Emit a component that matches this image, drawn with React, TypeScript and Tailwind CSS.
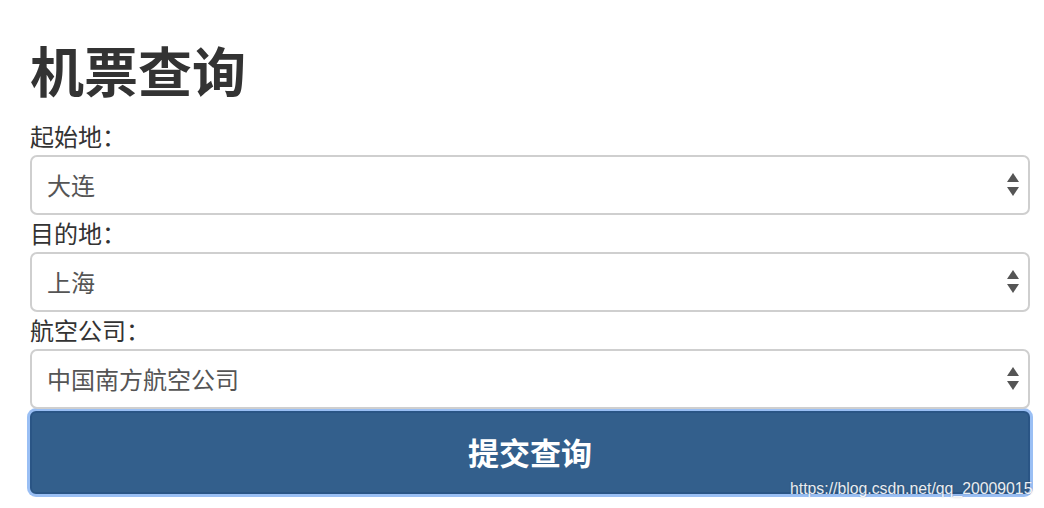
import React from "react";

const font = { fontFamily: '"Noto Sans CJK SC", "Noto Sans", sans-serif' };

function Arrows() {
  return (
    <svg width="14" height="26" viewBox="0 0 14 26" className="absolute right-[8px] top-1/2 -translate-y-1/2">
      <polygon points="7,1 13,10 1,10" fill="#555" />
      <polygon points="1,15 13,15 7,24" fill="#555" />
    </svg>
  );
}

function FakeSelect({ value }: { value: string }) {
  return (
    <div className="relative h-[60px] w-full rounded-[7px] border-2 border-[#cfcfcf] bg-white pl-[15px] flex items-center text-[24px] text-[#555]">
      <span className="leading-none">{value}</span>
      <Arrows />
    </div>
  );
}

function Label({ text }: { text: string }) {
  return <div className="mt-[1px] mb-[2px] text-[24px] leading-[34px] text-[#333]">{text}</div>;
}

export default function App() {
  return (
    <div className="relative w-[1044px] h-[508px] bg-white overflow-hidden" style={font}>
      <div className="pt-[41px] pl-[30px] w-[1030px]">
        <h1 className="text-[54px] leading-[58px] font-bold text-[#333] mb-[20px]">机票查询</h1>
        <Label text="起始地：" />
        <FakeSelect value="大连" />
        <Label text="目的地：" />
        <FakeSelect value="上海" />
        <Label text="航空公司：" />
        <FakeSelect value="中国南方航空公司" />
        <button className="mt-[2px] h-[83px] w-full rounded-[6px] border-2 border-[#2a5585] bg-[#335f8c] text-white text-[31px] font-semibold shadow-[0_0_0_3px_rgba(120,170,240,0.75)] flex items-center justify-center">
          提交查询
        </button>
      </div>
      <div
        className="absolute left-[790px] top-[478px] text-[15.8px] leading-[22px] text-white/90 whitespace-nowrap"
        style={{ fontFamily: '"Liberation Sans", Arial, sans-serif', textShadow: "0 0 2px rgba(0,0,0,0.25)" }}
      >
        https://blog.csdn.net/qq_20009015
      </div>
    </div>
  );
}
